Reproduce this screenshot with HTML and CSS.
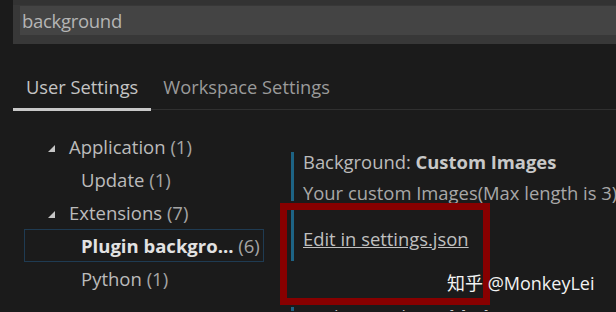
FILE: index.html
```html
<!DOCTYPE html>
<html lang="en">
<head>
 <meta charset="UTF-8">
 <title>Settings</title>
 <link rel="stylesheet" href="styles.css">
</head>
<body>
<div class="search">
 <div class="search_input">background</div>
</div>
<div class="tabs">
 <div class="tab active">User Settings</div>
 <div class="tab">Workspace Settings</div>
</div>
<div class="main">
 <div class="tree">
  <div class="row group"><svg class="twist" width="8" height="8" viewBox="0 0 8 8"><polygon points="7,0 7,7 0,7" fill="#c5c5c5"/></svg>Application <span class="count">(1)</span></div>
  <div class="row child">Update <span class="count">(1)</span></div>
  <div class="row group"><svg class="twist" width="8" height="8" viewBox="0 0 8 8"><polygon points="7,0 7,7 0,7" fill="#c5c5c5"/></svg>Extensions <span class="count">(7)</span></div>
  <div class="row child selected"><b>Plugin backgro...</b>&nbsp;<span class="count">(6)</span></div>
  <div class="row child">Python <span class="count">(1)</span></div>
 </div>
 <div class="settings">
  <div class="item first">
   <div class="title">Background: <b>Custom Images</b></div>
   <div class="desc">Your custom Images(Max length is 3)</div>
  </div>
  <div class="item second">
   <a class="edit">Edit in settings.json</a>
  </div>
  <div class="item third">
   <div class="title">Background: <b>Enabled</b></div>
  </div>
 </div>
</div>
<div class="mark"></div>
<div class="watermark">知乎 @MonkeyLei</div>
</body>
</html>
```

FILE: styles.css
```css
body{
  margin: 0;
  width: 616px;
  height: 312px;
  overflow: hidden;
  background: #1b1b1b;
  color: #bbbbbb;
  font-family: "Open Sans", "Noto Sans CJK SC", sans-serif;
  font-size: 16px;
  position: relative;
}
.search{
  margin-left: 13px;
  background: #383838;
  border-top: 5px solid #333333;
  padding: 1px 0 9px 7px;
}
.search_input{
  background: #444444;
  height: 29px;
  line-height: 29px;
  padding-left: 2px;
  font-size: 18.5px;
  letter-spacing: -0.3px;
  color: #b5b5b5;
}
.tabs{
  display: flex;
  margin: 29px 0 0 13px;
  border-bottom: 1px solid #303030;
}
.tab{
  padding: 0 13px 8px 12px;
  font-size: 18.3px;
  line-height: 27px;
  color: #9a9a9a;
  border-bottom: 3px solid transparent;
  margin-bottom: -2px;
}
.tab.active{
  color: #c4c4c4;
  border-bottom-color: #c8c8c8;
  padding-left: 13px;
}
.main{
  display: flex;
  margin-top: 20px;
  height: 181px;
  overflow: hidden;
}
.tree{
  width: 267px;
  padding-left: 24px;
  flex: none;
}
.row{
  height: 33px;
  line-height: 33px;
  box-sizing: border-box;
  white-space: nowrap;
  font-size: 18.5px;
}
.group{
  padding-left: 24px;
}
.twist{
  margin-right: 13px;
  vertical-align: 1px;
}
.child{
  padding-left: 57px;
}
.selected{
  width: 240px;
  border: 1px solid #1f3b52;
  line-height: 31px;
  padding-left: 56px;
}
.selected b{
  color: #e2e2e2;
}
.count{
  color: #a5a5a5;
}
.settings{
  padding-top: 22px;
  flex: 1;
  white-space: nowrap;
  overflow: hidden;
  font-size: 18.4px;
}
.item{
  border-left: 3px solid #1d6384;
  padding-left: 9px;
}
.first{
  height: 49px;
  margin-bottom: 8px;
}
.first .title{
  line-height: 20px;
}
.first .desc{
  line-height: 20px;
  margin-top: 11px;
  color: #a8a8a8;
}
.second{
  height: 52px;
  line-height: 60px;
  margin-bottom: 46px;
}
.edit{
  color: #c0c0c0;
  text-decoration: underline;
}
.third{
  height: 30px;
  line-height: 20px;
}
b{
  color: #c8c8c8;
}
.mark{
  position: absolute;
  left: 280px;
  top: 203px;
  width: 196px;
  height: 88px;
  border: 7px solid #870000;
}
.watermark{
  position: absolute;
  left: 447px;
  top: 270px;
  font-size: 18px;
  line-height: 26px;
  color: #f2f2f2;
}
```
